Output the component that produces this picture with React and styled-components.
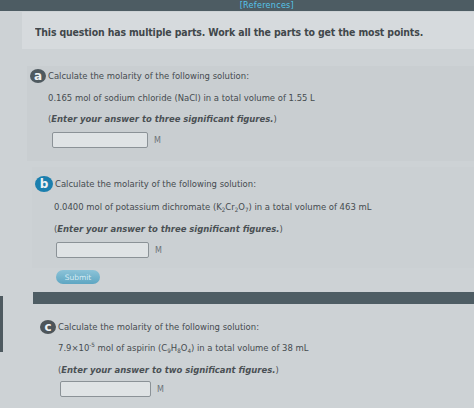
import React from 'react';
import styled, { createGlobalStyle } from 'styled-components';

const Global = createGlobalStyle`
  html, body { margin: 0; padding: 0; }
  body {
    background: #cdd2d5;
    font-family: "DejaVu Sans", Verdana, sans-serif;
    color: #3e4448;
    overflow: hidden;
  }
`;

const Page = styled.div`
  width: 474px;
  height: 408px;
  display: flex;
  flex-direction: column;
  position: relative;
`;

const TopBar = styled.div`
  height: 11px;
  background: #4d5c63;
  display: flex;
  align-items: center;
  justify-content: flex-end;
  padding-right: 180px;
`;

const RefLink = styled.span`
  font-size: 8px;
  line-height: 10px;
  color: #56c4ea;
  letter-spacing: 0.3px;
`;

const Header = styled.div`
  margin: 1px 0 0 22px;
  height: 37px;
  background: #d6dadd;
  display: flex;
  align-items: center;
  padding: 4px 0 0 13px;
  box-sizing: border-box;
`;

const Title = styled.div`
  font-weight: bold;
  font-size: 10.1px;
  letter-spacing: -0.15px;
  color: #41474b;
  transform: scaleX(0.93);
  transform-origin: left center;
  white-space: nowrap;
`;

const Part = styled.div`
  margin: ${p => p.top}px 0 0 ${p => p.left}px;
  height: ${p => p.height}px;
  background: ${p => p.bg || '#c9ced1'};
  padding: 3px 0 0 3px;
  box-sizing: border-box;
`;

const Row = styled.div`
  display: flex;
  align-items: center;
  gap: 2px;
  margin-top: ${p => p.mt || 0}px;
`;

const Badge = styled.span`
  width: ${p => p.size}px;
  height: ${p => p.size - 2}px;
  border-radius: 50%;
  background: ${p => p.color};
  color: #eef2f4;
  font-weight: bold;
  font-size: 12px;
  line-height: 1;
  display: flex;
  align-items: center;
  justify-content: center;
  flex-shrink: 0;
`;

const Text = styled.div`
  font-size: 9.1px;
  line-height: 11px;
  color: #454b4f;
  white-space: nowrap;
  transform: scaleX(0.93);
  transform-origin: left center;
`;

const Body = styled.div`
  padding-left: ${p => p.pad}px;
  display: flex;
  flex-direction: column;
`;

const Line = styled(Text)`
  margin-top: ${p => p.mt}px;
`;

const Hint = styled(Line)`
  font-weight: bold;
  font-style: italic;
  color: #4a5054;
`;

const Paren = styled.span`
  font-weight: normal;
  font-style: normal;
`;

const AnswerRow = styled.div`
  display: flex;
  align-items: center;
  gap: 6px;
  margin-top: ${p => p.mt}px;
  margin-left: ${p => p.ml}px;
`;

const Input = styled.div`
  width: ${p => p.w}px;
  height: 16px;
  border: 1px solid #8b9297;
  border-radius: 2px;
  background: #dfe3e5;
  box-sizing: border-box;
`;

const Unit = styled.span`
  font-size: 8px;
  color: #6c7378;
`;

const SubmitBtn = styled.div`
  margin: 2px 0 0 ${p => p.ml}px;
  width: 44px;
  height: 14px;
  border-radius: 7px;
  background: linear-gradient(#8cc3d8, #5ea6c2);
  color: #d7ecf4;
  font-size: 7.5px;
  display: flex;
  align-items: center;
  justify-content: center;
`;

const Divider = styled.div`
  margin: 8px 0 0 33px;
  height: 12px;
  background: #4e5d64;
`;

const EdgeStrip = styled.div`
  position: absolute;
  left: 0;
  top: 296px;
  width: 3px;
  height: 56px;
  background: #4e5a60;
`;

const Sub = styled.sub`
  font-size: 6px;
  line-height: 0;
  vertical-align: -2px;
`;

const Sup = styled.sup`
  font-size: 6px;
  line-height: 0;
  vertical-align: 4px;
`;

export default function App() {
  return (
    <Page>
      <Global />
      <TopBar><RefLink>[References]</RefLink></TopBar>
      <Header>
        <Title>This question has multiple parts. Work all the parts to get the most points.</Title>
      </Header>

      <Part top={17} left={27} height={95}>
        <Row>
          <Badge size={16} color="#4f5a60">a</Badge>
          <Text>Calculate the molarity of the following solution:</Text>
        </Row>
        <Body pad={18}>
          <Line mt={10}>0.165 mol of sodium chloride (NaCl) in a total volume of 1.55 L</Line>
          <Hint mt={10}><Paren>(</Paren>Enter your answer to three significant figures.<Paren>)</Paren></Hint>
          <AnswerRow mt={7} ml={4}>
            <Input w={96} />
            <Unit>M</Unit>
          </AnswerRow>
        </Body>
      </Part>

      <Part top={6} left={32} height={101} bg="#cbd0d3">
        <Row mt={6}>
          <Badge size={18} color="#1b7fae">b</Badge>
          <Text>Calculate the molarity of the following solution:</Text>
        </Row>
        <Body pad={19}>
          <Line mt={10}>0.0400 mol of potassium dichromate (K<Sub>2</Sub>Cr<Sub>2</Sub>O<Sub>7</Sub>) in a total volume of 463 mL</Line>
          <Hint mt={11}><Paren>(</Paren>Enter your answer to three significant figures.<Paren>)</Paren></Hint>
          <AnswerRow mt={7} ml={2}>
            <Input w={93} />
            <Unit>M</Unit>
          </AnswerRow>
        </Body>
      </Part>

      <SubmitBtn ml={56}>Submit</SubmitBtn>
      <Divider />

      <Part top={8} left={37} height={92} bg="#cdd2d5">
        <Row mt={5}>
          <Badge size={16} color="#4d555a">c</Badge>
          <Text>Calculate the molarity of the following solution:</Text>
        </Row>
        <Body pad={18}>
          <Line mt={9}>7.9×10<Sup>-5</Sup> mol of aspirin (C<Sub>9</Sub>H<Sub>8</Sub>O<Sub>4</Sub>) in a total volume of 38 mL</Line>
          <Hint mt={11}><Paren>(</Paren>Enter your answer to two significant figures.<Paren>)</Paren></Hint>
          <AnswerRow mt={5} ml={2}>
            <Input w={91} />
            <Unit>M</Unit>
          </AnswerRow>
        </Body>
      </Part>

      <EdgeStrip />
    </Page>
  );
}
